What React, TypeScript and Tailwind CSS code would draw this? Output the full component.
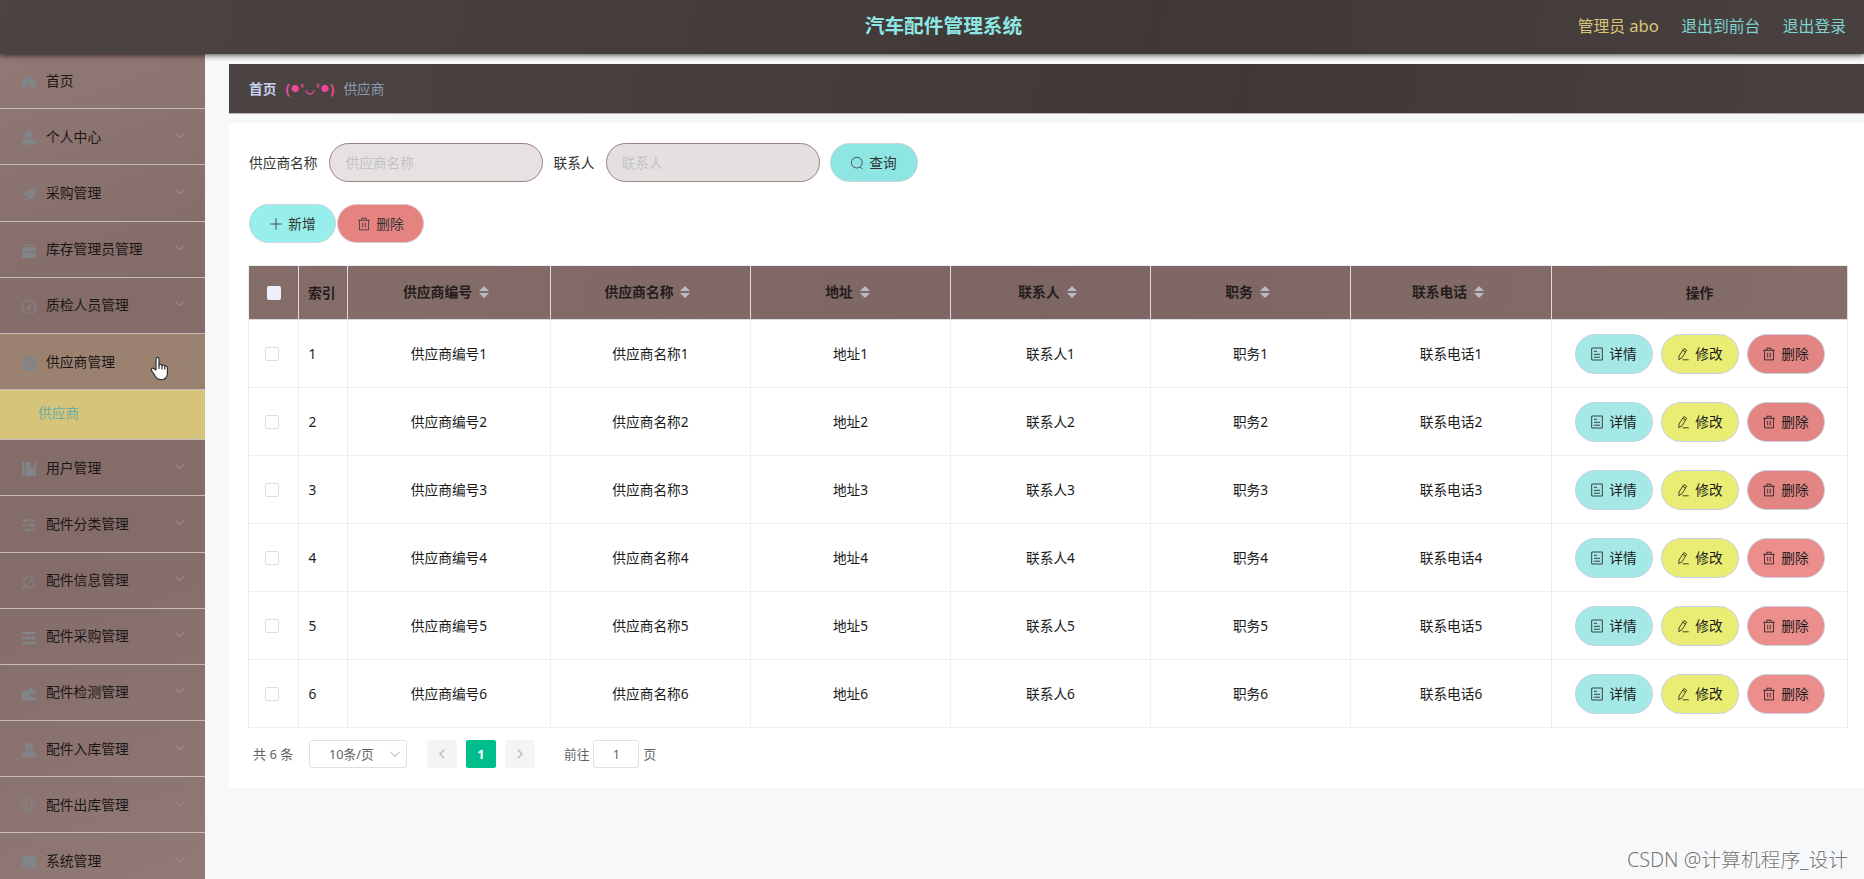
import type { ReactNode } from 'react';

type MenuItem = { label: string; icon: ReactNode; active?: boolean; leaf?: boolean };

const MENU: MenuItem[] = [
  { label: '首页', leaf: true, icon: <path d="M8 1.2 1 7.6V14.6h4.8V10.4h4.4v4.2H15V7.6z" /> },
  {
    label: '个人中心',
    icon: (
      <>
        <circle cx="8" cy="4.6" r="4" />
        <path d="M1 14.8v-2.6c0-1.8 1.2-2.7 3-2.7h8c1.8 0 3 .9 3 2.7v2.6z" />
      </>
    ),
  },
  { label: '采购管理', icon: <path d="M15.2.8.8 8.2l3.8 1.7 7-5.6-5.4 6.3v4.6l2.6-3.2 3.6 1.6z" /> },
  {
    label: '库存管理员管理',
    icon: (
      <>
        <path d="M1 4.2h14v4.3H1zM1 9.4h14V15H1z" />
        <path d="M5 4V1.8h6V4" fill="none" stroke="currentColor" strokeWidth="1.2" />
      </>
    ),
  },
  {
    label: '质检人员管理',
    icon: (
      <>
        <circle cx="8" cy="8" r="7" fill="none" stroke="currentColor" strokeWidth="1.1" />
        <path d="M10.8 3.8 8.9 9.2a1.3 1.3 0 1 1-1.8-.9z" />
      </>
    ),
  },
  {
    label: '供应商管理',
    active: true,
    icon: (
      <path
        fillRule="evenodd"
        d="M1.6 2h3V.6h6.8V2h3v13.6H1.6zM4.6 2v1.6h6.8V2zM4.2 6.4v1h7.6v-1zM4.2 10.6v1h7.6v-1z"
      />
    ),
  },
  { label: '用户管理', icon: <path d="M1 1h2.6v14H1zM4.6 1h5v6.2l1.9-1.6 1.9 1.6V1H15v14H4.6z" /> },
  {
    label: '配件分类管理',
    icon: (
      <>
        <path d="M1 3.2h14M1 8h14M1 12.8h14" stroke="currentColor" strokeWidth="1.2" />
        <circle cx="5" cy="3.2" r="1.7" />
        <circle cx="11" cy="8" r="1.7" />
        <circle cx="6" cy="12.8" r="1.7" />
      </>
    ),
  },
  {
    label: '配件信息管理',
    icon: (
      <path
        d="M3 12.8V7a5 5 0 0 1 8.6-3.4M13 6v6.8M1 12.8h14M6.6 15h2.8M1.6 14.8 14.4 1.2"
        fill="none"
        stroke="currentColor"
        strokeWidth="1.1"
      />
    ),
  },
  { label: '配件采购管理', icon: <path d="M1 1.8h14v2.4H1zM1 6.8h9v2.4H1zM11 5.6 15 8l-4 2.4zM1 11.8h14v2.4H1z" /> },
  {
    label: '配件检测管理',
    icon: <path d="M1 4.6h6.2L11 1.6l1.8 3H15v2.8h-4.2a1.9 1.9 0 0 0 0 3.8H15v3.6H1z" />,
  },
  {
    label: '配件入库管理',
    icon: (
      <>
        <circle cx="8" cy="4.8" r="4.2" />
        <path d="M.8 15c0-3.4 1.6-5.8 4.6-6.2L8 10.6l2.6-1.8c3 .4 4.6 2.8 4.6 6.2z" />
      </>
    ),
  },
  {
    label: '配件出库管理',
    icon: (
      <g fill="none" stroke="currentColor" strokeWidth="1.3">
        <rect x="4.8" y=".8" width="6.4" height="10" rx="3.2" />
        <path d="M2.4 6.2V8a5.6 5.6 0 0 0 11.2 0V6.2M8 13.6V16" />
      </g>
    ),
  },
  { label: '系统管理', icon: <path d="M1 1h14v11.6H1zM3.8 13.8h8.4V15H3.8z" /> },
];

const COLUMNS = ['供应商编号', '供应商名称', '地址', '联系人', '职务', '联系电话'];
const ROWS = [1, 2, 3, 4, 5, 6];

function Chevron({ className = '', up = false }: { className?: string; up?: boolean }) {
  return (
    <svg className={className} viewBox="0 0 12 12" fill="none" stroke="currentColor" strokeWidth="1.1">
      <path d={up ? 'M1.5 8.2 6 3.8l4.5 4.4' : 'M1.5 3.8 6 8.2l4.5-4.4'} />
    </svg>
  );
}

function LineIcon({ children }: { children: ReactNode }) {
  return (
    <svg className="h-[14px] w-[14px] shrink-0" viewBox="0 0 14 14" fill="none" stroke="currentColor" strokeWidth="0.8">
      {children}
    </svg>
  );
}

function TrashIcon() {
  return (
    <LineIcon>
      <path d="M1.2 3.3h11.6M4.8 3.2V1.2h4.4v2M2.5 3.3v9.6h9V3.3M5.7 5.8v4.6M8.3 5.8v4.6" />
    </LineIcon>
  );
}

function DocIcon() {
  return (
    <LineIcon>
      <path d="M1.7 1h10.6v12H1.7zM4 4.3h3M4 7.3h6M4 10.2h6" />
    </LineIcon>
  );
}

function EditIcon() {
  return (
    <LineIcon>
      <path d="M7.8 1.6 10.6 3.2 6 10.8 2.8 12.6 3 9zM6.8 3.4l2.7 1.6M6.6 12.8h6.2" />
    </LineIcon>
  );
}

function SortCaret() {
  return (
    <svg className="mr-[6px] ml-[7px] h-[12px] w-[10px]" viewBox="0 0 10 12" fill="#b9bcc4">
      <path d="M5 0 10 5H0zM5 12 0 7h10z" />
    </svg>
  );
}

function Sidebar() {
  return (
    <aside className="w-[205px] shrink-0 overflow-hidden bg-[linear-gradient(160deg,#917976_0%,#846c69_30%,#846c69_60%,#917976_100%)]">
      {MENU.map((item) => (
        <div key={item.label}>
          <div
            className={`flex h-[56.2px] items-center border-b border-[#c4bbba] pr-5 pl-[21px] text-[13.8px] text-[#1c1615] ${
              item.active ? 'bg-[#9b8270]' : ''
            }`}
          >
            <svg className="mt-[3px] mr-[9px] h-4 w-4 text-[#818488]" viewBox="0 0 16 16" fill="currentColor">
              {item.icon}
            </svg>
            <span className="flex-1">{item.label}</span>
            {!item.leaf && (
              <Chevron
                up={item.active}
                className={`mb-[3px] h-[11px] w-[11px] ${item.active ? 'text-[#958579]' : 'text-[#9b9293]'}`}
              />
            )}
          </div>
          {item.active && (
            <div className="flex h-[50px] items-center border-b border-[#c4bbba] bg-[#d6c47b] pb-[3px] pl-[38px] text-[13.7px] text-[#6fada0]">
              供应商
            </div>
          )}
        </div>
      ))}
    </aside>
  );
}

function Filters() {
  return (
    <div className="flex items-center">
      <label className="mr-[12px]">供应商名称</label>
      <input
        placeholder="供应商名称"
        className="h-[39px] w-[214px] rounded-full border border-[#9b8583] bg-[#e8e1e1] px-[15px] placeholder:text-[#bfc3cb]"
      />
      <label className="mr-[11px] ml-[10px]">联系人</label>
      <input
        placeholder="联系人"
        className="h-[39px] w-[214px] rounded-full border border-[#9b8583] bg-[#e6dfdf] px-[15px] placeholder:text-[#bfc3cb]"
      />
      <button className="ml-[10px] flex h-[39px] w-[88px] items-center justify-center gap-[5px] rounded-full border border-[#c9d5da] bg-[#8ee6e2]">
        <LineIcon>
          <circle cx="6.8" cy="6.6" r="5.4" />
          <path d="m10.2 10.8 2.2 2.2" />
        </LineIcon>
        查询
      </button>
    </div>
  );
}

function SupplierTable() {
  const action = 'flex h-10 w-[78px] items-center justify-center gap-[5px] rounded-full border border-[#c6cfe2]';
  return (
    <table className="mt-[22px] -ml-px w-[1600px] table-fixed border-separate border-spacing-0 border-t border-l border-[#ebeef5] text-[#1b1b1b]">
      <colgroup>
        <col className="w-[50px]" />
        <col className="w-[49px]" />
        <col className="w-[203px]" />
        <col className="w-[200px]" />
        <col className="w-[200px]" />
        <col className="w-[200px]" />
        <col className="w-[200px]" />
        <col className="w-[201px]" />
        <col />
      </colgroup>
      <thead>
        <tr className="h-[54px] bg-[linear-gradient(100deg,#856d6a_0%,#7c6562_50%,#856d6a_100%)] text-[13.8px] text-[#241c1c]">
          <th className="border-r border-b border-[#dcdbe2]">
            <span className="ml-[18px] block h-[14px] w-[14px] rounded-[2px] bg-[#edf0fb]" />
          </th>
          <th className="border-r border-b border-[#dcdbe2] pl-[9px] text-left font-bold">索引</th>
          {COLUMNS.map((c) => (
            <th key={c} className="border-r border-b border-[#dcdbe2] pb-[2px] font-bold">
              <span className="flex items-center justify-center">
                {c}
                <SortCaret />
              </span>
            </th>
          ))}
          <th className="border-r border-b border-[#dcdbe2] font-bold">操作</th>
        </tr>
      </thead>
      <tbody>
        {ROWS.map((n) => (
          <tr key={n} className="h-[68px]">
            <td className="border-r border-b border-[#ebeef5]">
              <span className="ml-[16px] block h-[14px] w-[14px] rounded-[2px] border border-[#dcdfe6] bg-white" />
            </td>
            <td className="border-r border-b border-[#ebeef5] pl-[9.5px]">{n}</td>
            {COLUMNS.map((c) => (
              <td key={c} className="border-r border-b border-[#ebeef5] text-center">
                {c}
                {n}
              </td>
            ))}
            <td className="border-r border-b border-[#ebeef5]">
              <div className="flex justify-center gap-2">
                <button className={`${action} bg-[#a5e9e7]`}>
                  <DocIcon />
                  详情
                </button>
                <button className={`${action} bg-[#e9ed74]`}>
                  <EditIcon />
                  修改
                </button>
                <button className={`${action} ${n < 4 ? 'bg-[#e38583]' : 'bg-[#eb8e8c]'}`}>
                  <TrashIcon />
                  删除
                </button>
              </div>
            </td>
          </tr>
        ))}
      </tbody>
    </table>
  );
}

function Pagination() {
  return (
    <div className="mt-[12px] flex items-center pl-1 text-[12.7px] text-[#606266]">
      <span className="w-[56px] text-[13px]">共 6 条</span>
      <div className="flex h-7 w-[98px] items-center justify-between rounded-[3px] border border-[#dcdfe6] pr-[5px] pl-[19px]">
        10条/页
        <Chevron className="h-3 w-3 text-[#c0c4cc]" />
      </div>
      <div className="ml-[20px] flex gap-[9px]">
        <span className="flex h-7 w-[30px] items-center justify-center rounded-[2px] bg-[#f4f4f5] text-[#b9bdc5]">
          <svg className="h-3 w-3" viewBox="0 0 12 12" fill="none" stroke="currentColor" strokeWidth="1.6">
            <path d="M8 1.8 4 6l4 4.2" />
          </svg>
        </span>
        <span className="flex h-7 w-[30px] items-center justify-center rounded-[2px] bg-[#00be8c] font-bold text-white">1</span>
        <span className="flex h-7 w-[30px] items-center justify-center rounded-[2px] bg-[#f4f4f5] text-[#b9bdc5]">
          <svg className="h-3 w-3" viewBox="0 0 12 12" fill="none" stroke="currentColor" strokeWidth="1.6">
            <path d="M4 1.8 8 6l-4 4.2" />
          </svg>
        </span>
      </div>
      <span className="ml-[29px]">前往</span>
      <span className="mx-[4px] flex h-7 w-[46px] items-center justify-center rounded-[3px] border border-[#dcdfe6]">1</span>
      <span>页</span>
    </div>
  );
}

export default function App() {
  return (
    <div className="relative flex h-[879px] w-[1864px] flex-col overflow-hidden bg-[#f7f8fa] font-['Noto_Sans','Noto_Sans_CJK_SC',sans-serif] text-[13.7px] leading-[20px] text-[#333]">
      <header className="relative z-10 flex h-[54px] shrink-0 items-center bg-[linear-gradient(100deg,#4b4442_0%,#3f3837_62%,#484140_100%)] pr-[18px] pb-[3px] shadow-[0_1px_6px_rgba(0,0,0,0.75)]">
        <div className="w-[500px]" />
        <h1 className="flex-1 pl-[41px] text-center text-[19.7px] font-bold text-[#8ee6e2]">汽车配件管理系统</h1>
        <nav className="flex w-[500px] justify-end gap-[22.5px] text-[15.8px]">
          <span className="text-[#d8c577]">
            管理员 <span className="text-[16.6px]">abo</span>
          </span>
          <a className="text-[#7fd3d0]">退出到前台</a>
          <a className="text-[#7fd3d0]">退出登录</a>
        </nav>
      </header>

      <div className="-mt-px flex min-h-0 flex-1">
        <Sidebar />
        <main className="min-w-0 flex-1 pt-[11px] pl-6">
          <div className="flex h-[50px] items-center border-b border-[#b9b0b2] bg-[linear-gradient(100deg,#4b4442_0%,#3f3837_62%,#484140_100%)] pl-5">
            <span className="font-bold text-[#c8d2f0]">首页</span>
            <span className="mr-[9px] ml-[9px] flex w-[49px] items-center justify-between font-bold whitespace-nowrap text-[#ec4899]">
              <span>(</span>
              <span className="text-[8px]">●</span>
              <span>'</span>
              <span className="text-[11px]">◡</span>
              <span>'</span>
              <span className="text-[8px]">●</span>
              <span>)</span>
            </span>
            <span className="text-[#8d99ae]">供应商</span>
          </div>

          <section className="mt-[9px] h-[665px] bg-white pt-5 pl-5">
            <Filters />
            <div className="mt-[22px] flex gap-px">
              <button className="flex h-[39px] w-[87px] items-center justify-center gap-[5px] rounded-full border border-[#c9d5da] bg-[#97eeea]">
                <LineIcon>
                  <path d="M7 1.2v11.6M1.2 7h11.6" />
                </LineIcon>
                新增
              </button>
              <button className="flex h-[39px] w-[87px] items-center justify-center gap-[5px] rounded-full border border-[#dcc9cc] bg-[#e58381]">
                <TrashIcon />
                删除
              </button>
            </div>
            <SupplierTable />
            <Pagination />
          </section>
        </main>
      </div>

      {/* hand pointer over the open menu entry */}
      <svg className="absolute top-[356px] left-[150px] h-[25px] w-[20px]" viewBox="0 0 20 25" fill="#fff" stroke="#333" strokeWidth="1.2">
        <path d="M6 14V3.2C6 .8 9 .8 9 3.2v6c.6-1.2 2.8-1 3 .4.8-.9 2.6-.6 2.8.8 1-.7 2.6-.2 2.6 1.4v5.4c0 4-2.4 6.4-6.4 6.4-3.2 0-4.6-1.4-5.8-3.6L1.4 14.4c-.8-1.8 1.2-3 2.6-1.6z" strokeLinejoin="round" />
        <path d="M9 9v4M12 10v3.4M14.8 11v2.6" fill="none" />
      </svg>

      <div className="absolute right-[16px] bottom-[5px] text-[19.8px] leading-[28px] font-light text-[#767676] [text-shadow:-1px_-1px_0_#fff]">
        CSDN @计算机程序_设计
      </div>
    </div>
  );
}
